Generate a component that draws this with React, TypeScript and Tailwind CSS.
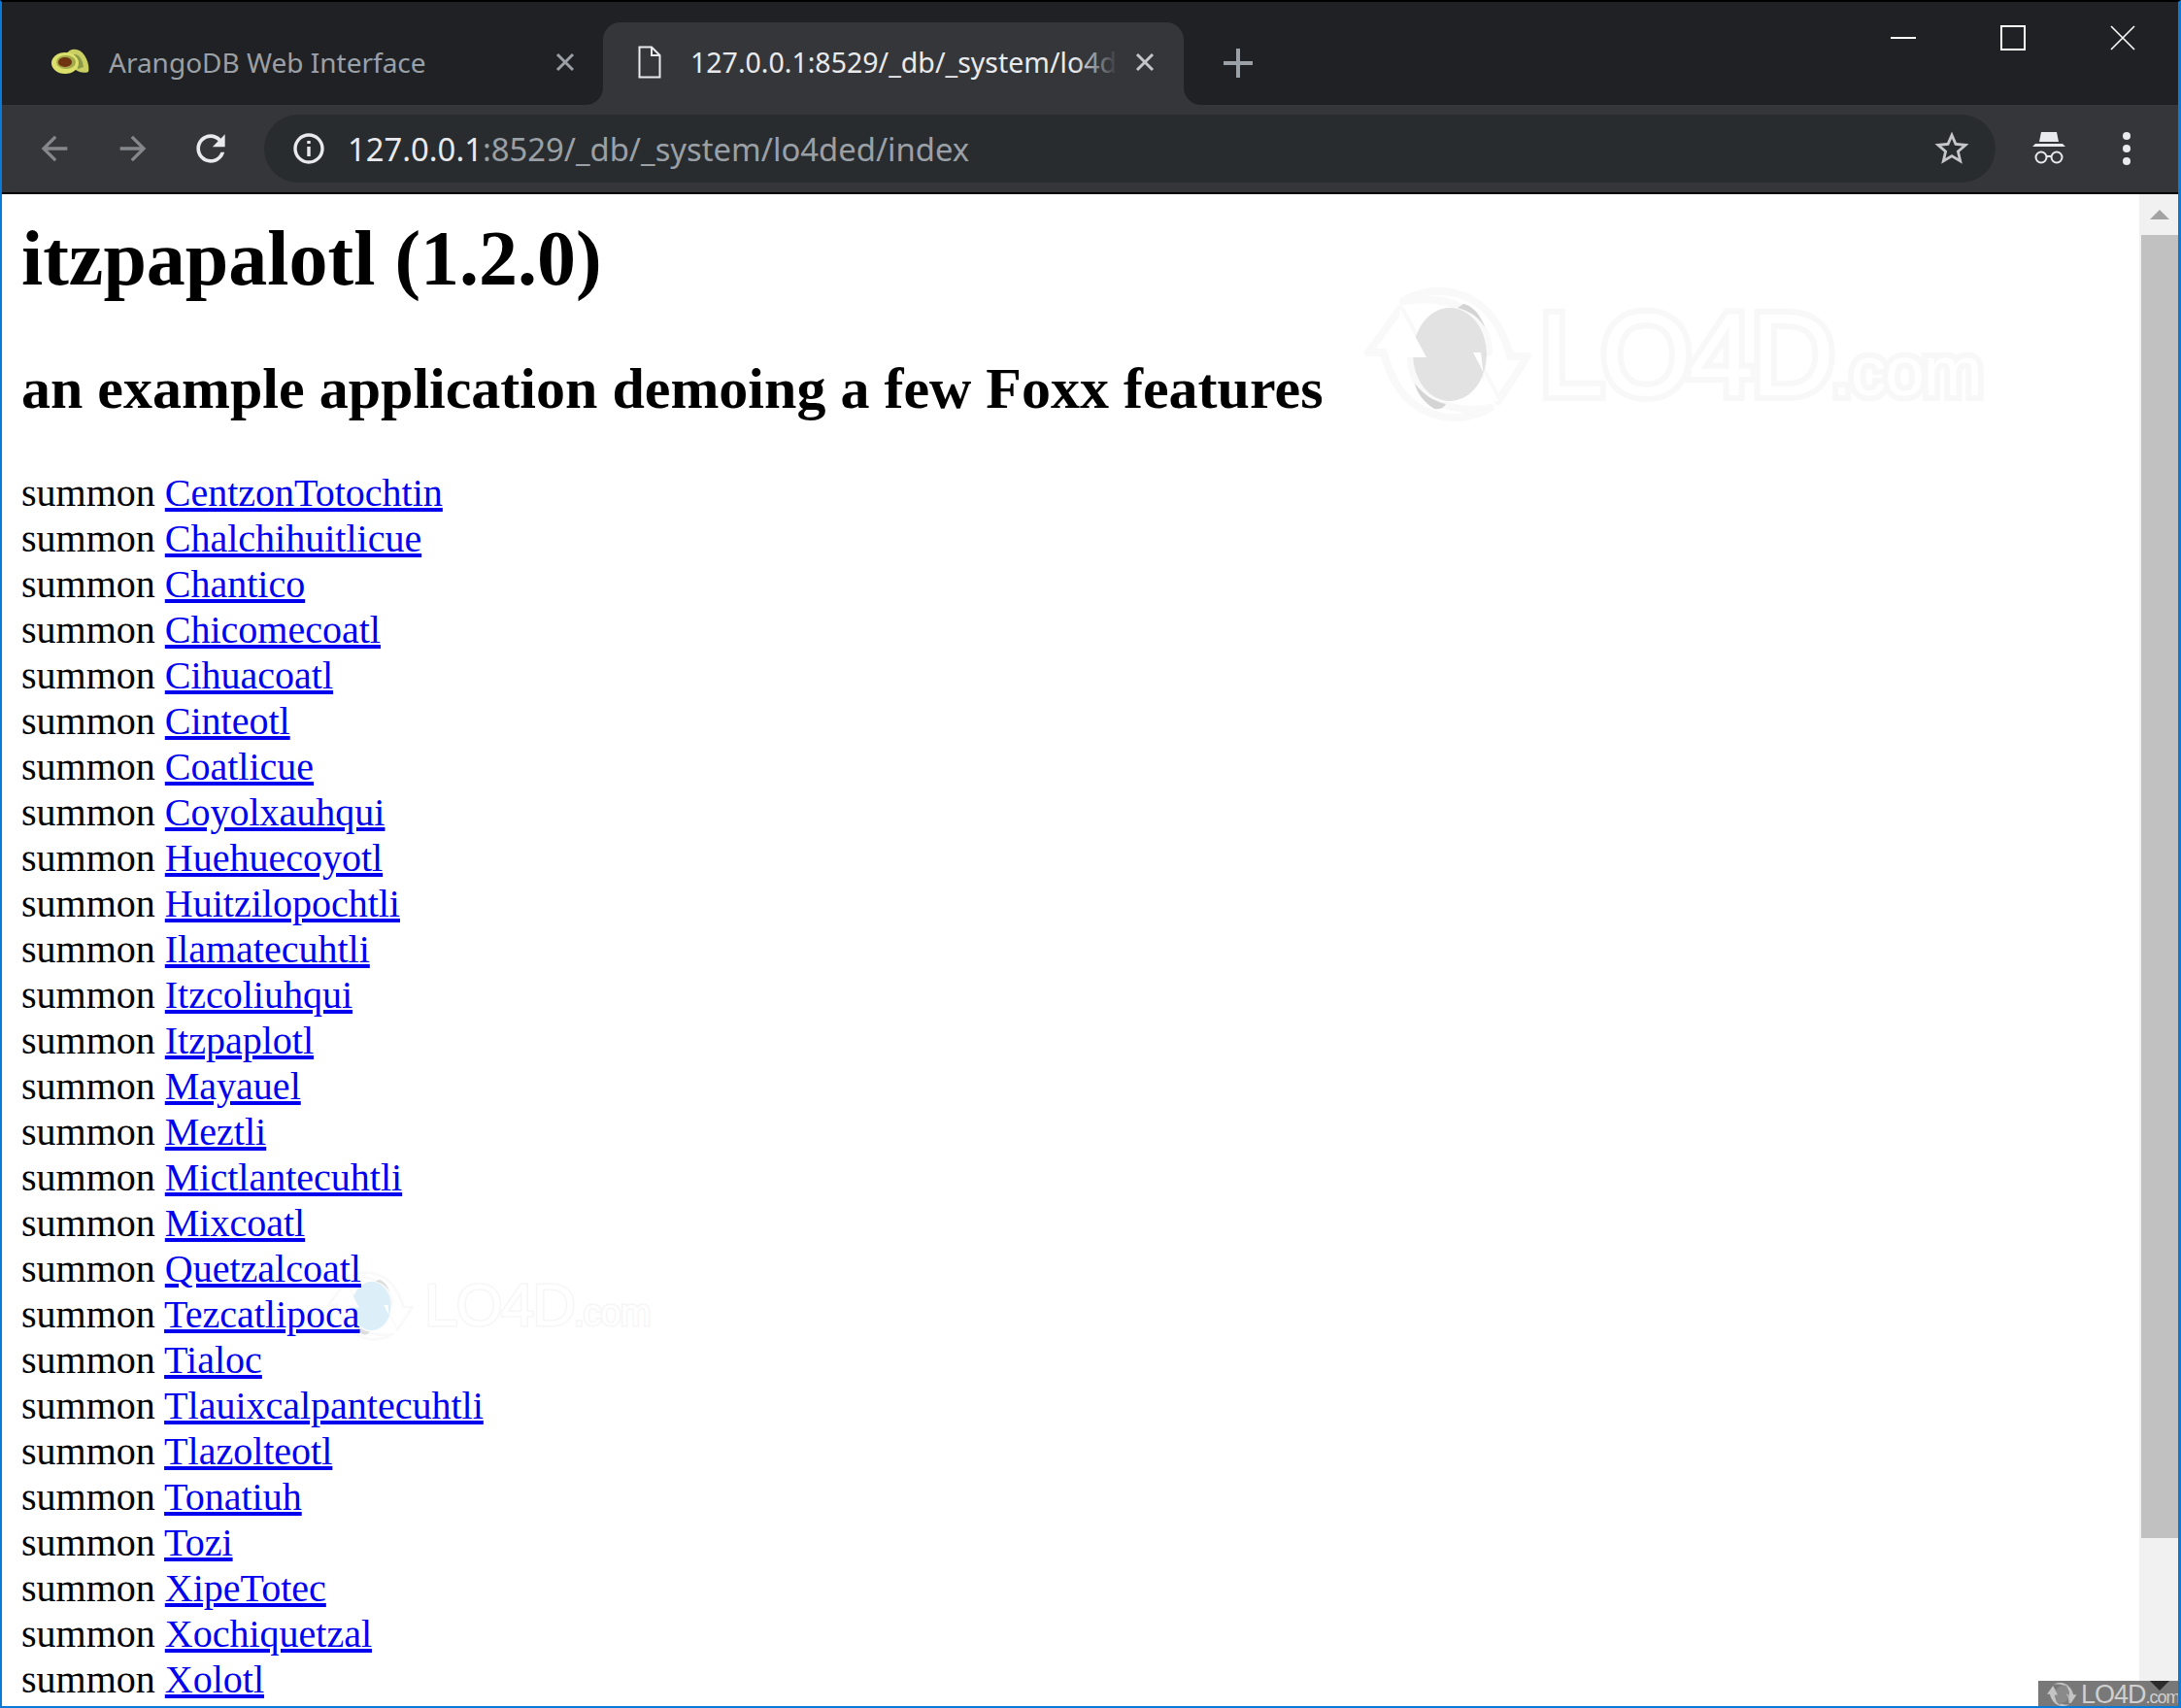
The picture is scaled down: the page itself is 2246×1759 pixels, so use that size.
import React from 'react';

const gods = [
  'CentzonTotochtin', 'Chalchihuitlicue', 'Chantico', 'Chicomecoatl', 'Cihuacoatl', 'Cinteotl', 'Coatlicue',
  'Coyolxauhqui', 'Huehuecoyotl', 'Huitzilopochtli', 'Ilamatecuhtli', 'Itzcoliuhqui', 'Itzpaplotl', 'Mayauel',
  'Meztli', 'Mictlantecuhtli', 'Mixcoatl', 'Quetzalcoatl', 'Tezcatlipoca', 'Tialoc', 'Tlauixcalpantecuhtli',
  'Tlazolteotl', 'Tonatiuh', 'Tozi', 'XipeTotec', 'Xochiquetzal', 'Xolotl',
];

const UI_FONT = 'font-["Noto_Sans",sans-serif]';

const UP_ARROW = 'M47 23L74 73L58 73C58 90 66 115 100 124C115 128 128 127 140 125C105 145 60 135 40 95C32 78 30 70 30 68L14 68Z';
const DOWN_ARROW = 'M148 118L122 68L138 68C138 50 128 25 95 16C78 12 62 13 50 15C85 -5 130 5 150 45C158 62 160 70 160 72L178 72Z';

// LO4D logo: round blob with an up and a down arrow
const LogoMark = ({ blob, arrow, halo, crescent, className }: { blob: string; arrow: string; halo: number; crescent: string; className: string }) => (
  <svg viewBox="0 0 190 140" className={className}>
    <g stroke="#f9f9f9" strokeWidth={halo} strokeLinejoin="round">
      <path d={UP_ARROW} fill={arrow} />
      <path d={DOWN_ARROW} fill={arrow} />
    </g>
    <path d="M112 18C122 20 130 30 134 42C128 32 120 26 106 22Z" fill={crescent} />
    <path d="M62 100C64 110 72 120 82 126C90 127 92 124 94 121C80 118 70 110 62 100Z" fill={crescent} />
    <ellipse cx="98" cy="70" rx="38" ry="48" fill={blob} />
    <path d="M47 23L74 73L50 73L45 40Z" fill={arrow} />
    <path d="M122 68L148 118L136 118L130 68Z" fill={arrow} />
  </svg>
);

const Arrow = ({ flip }: { flip?: boolean }) => (
  <svg viewBox="0 0 24 24" className={`w-[40px] h-[40px] text-[#84878b] ${flip ? '-scale-x-100' : ''}`} fill="currentColor">
    <path d="M20 11H7.83l5.59-5.59L12 4l-8 8 8 8 1.41-1.41L7.83 13H20v-2z" />
  </svg>
);

const Favicon = () => (
  <svg viewBox="0 0 40 28" className="w-[40px] h-[28px] shrink-0">
    <path d="M16 6C20 -1 30 -1 35 7C39 13 40 20 39 24C34 26 29 24 26 22Z" fill="#c9cf62" />
    <path d="M24 6C29 5 33 11 34 19L28 21Z" fill="#8c9a48" />
    <ellipse cx="15" cy="15" rx="14" ry="11" fill="#dbe06b" />
    <ellipse cx="16" cy="14" rx="10" ry="7" fill="#a3a94b" />
    <ellipse cx="15" cy="14" rx="7" ry="5" fill="#6f3410" />
  </svg>
);

const TabClose = ({ color }: { color: string }) => (
  <svg viewBox="0 0 20 20" className={`w-[20px] h-[20px] shrink-0 ${color}`} stroke="currentColor" strokeWidth="3" fill="none">
    <path d="M2 2L18 18M18 2L2 18" />
  </svg>
);

export default function App() {
  return (
    <div className="relative flex flex-col w-[2246px] h-[1759px] overflow-hidden bg-white border-l-2 border-r-[3px] border-b-2 border-[#0a7ad8] border-t-2 border-t-black">
      {/* タブバー */}
      <div className={`flex items-end h-[106px] shrink-0 bg-[#202124] ${UI_FONT}`}>
        <div className="flex items-center w-[619px] h-[85px] pl-[50px] pr-[29px] pb-[4px]">
          <Favicon />
          <span className="ml-[20px] text-[28px] leading-[40px] text-[#9aa0a6]">ArangoDB Web Interface</span>
          <div className="ml-auto"><TabClose color="text-[#9aa0a6]" /></div>
        </div>
        <div className="relative flex items-center w-[598px] h-[85px] pl-[36px] pr-[30px] pb-[4px] bg-[#35363a] rounded-t-[18px]">
          <div className="absolute left-[-18px] bottom-0 w-[18px] h-[18px] bg-[#35363a]">
            <div className="w-full h-full bg-[#202124] rounded-br-[18px]" />
          </div>
          <div className="absolute right-[-18px] bottom-0 w-[18px] h-[18px] bg-[#35363a]">
            <div className="w-full h-full bg-[#202124] rounded-bl-[18px]" />
          </div>
          <svg viewBox="0 0 24 34" className="w-[24px] h-[34px] shrink-0 text-[#e8eaed]" fill="none" stroke="currentColor" strokeWidth="2">
            <path d="M1.5 1.5H14L22.5 10V32.5H1.5ZM14 1.5V10H22.5" />
          </svg>
          <div className="relative ml-[30px] w-[440px] overflow-hidden whitespace-nowrap text-[28.5px] leading-[44px] text-[#e8eaed]">
            127.0.0.1:8529/_db/_system/lo4ded/index
            <div className="absolute right-0 top-0 bottom-0 w-[44px] bg-linear-to-r from-transparent to-[#35363a]" />
          </div>
          <div className="ml-auto"><TabClose color="text-[#c4c6c9]" /></div>
        </div>
        <svg viewBox="0 0 30 30" className="w-[30px] h-[30px] ml-[41px] mb-[28px] text-[#9aa0a6]" fill="currentColor">
          <path d="M13 0H17V13H30V17H17V30H13V17H0V13H13Z" />
        </svg>
        {/* ウィンドウ操作 */}
        <div className="flex ml-auto self-start h-[74px] text-white">
          <div className="flex items-center justify-center w-[113px]">
            <svg viewBox="0 0 26 2" className="w-[26px] h-[2px]" fill="currentColor"><rect width="26" height="2" /></svg>
          </div>
          <div className="flex items-center justify-center w-[113px]">
            <svg viewBox="0 0 26 26" className="w-[26px] h-[26px]" fill="none" stroke="currentColor" strokeWidth="2"><rect x="1" y="1" width="24" height="24" /></svg>
          </div>
          <div className="flex items-center justify-center w-[114px]">
            <svg viewBox="0 0 26 26" className="w-[26px] h-[26px]" fill="none" stroke="currentColor" strokeWidth="1.6"><path d="M1 1L25 25M25 1L1 25" /></svg>
          </div>
        </div>
      </div>

      {/* ツールバー */}
      <div className="flex items-center h-[92px] shrink-0 pl-[14px] bg-[#35363a] border-b-2 border-black">
        <div className="flex items-center justify-center w-[80px]"><Arrow /></div>
        <div className="flex items-center justify-center w-[81px]"><Arrow flip /></div>
        <div className="flex items-center justify-center w-[80px]">
          <svg viewBox="0 0 24 24" className="w-[44px] h-[44px] text-[#e8eaed]" fill="currentColor">
            <path d="M17.65 6.35C16.2 4.9 14.21 4 12 4c-4.42 0-7.99 3.58-7.99 8s3.57 8 7.99 8c3.73 0 6.84-2.55 7.73-6h-2.08c-.82 2.33-3.04 4-5.65 4-3.31 0-6-2.69-6-6s2.69-6 6-6c1.66 0 3.14.69 4.22 1.78L13 11h7V4l-2.35 2.35z" />
          </svg>
        </div>
        <div className={`flex items-center w-[1783px] h-[70px] ml-[15px] pl-[30px] pr-[24px] rounded-full bg-[#292c2f] ${UI_FONT}`}>
          <svg viewBox="0 0 32 32" className="w-[32px] h-[32px] shrink-0 text-[#e8eaed]" fill="none" stroke="currentColor" strokeWidth="3.4">
            <circle cx="16" cy="16" r="14" />
            <path d="M16 14V24M16 8V11" />
          </svg>
          <span className="ml-[24px] pt-[2px] text-[32.8px] leading-[44px] text-[#9aa0a6]"><span className="text-[#e8eaed]">127.0.0.1</span>:8529/_db/_system/lo4ded/index</span>
          <svg viewBox="0 0 24 24" className="w-[42px] h-[42px] ml-auto text-[#c4c6c9]" fill="currentColor">
            <path d="M22 9.24l-7.19-.62L12 2 9.19 8.63 2 9.24l5.46 4.73L5.82 21 12 17.27 18.18 21l-1.63-7.03L22 9.24zM12 15.4l-3.76 2.27 1-4.28-3.32-2.88 4.38-.38L12 6.1l1.71 4.04 4.38.38-3.32 2.88 1 4.28L12 15.4z" />
          </svg>
        </div>
        <svg viewBox="0 0 34 34" className="w-[34px] h-[34px] ml-[38px] text-[#e8eaed]" fill="none">
          <path d="M9 0L25 0L27 10H7ZM0 15H34L31 12H3Z" fill="currentColor" />
          <circle cx="9" cy="26" r="5.5" stroke="currentColor" strokeWidth="2" />
          <circle cx="25" cy="26" r="5.5" stroke="currentColor" strokeWidth="2" />
          <path d="M14 25H20" stroke="currentColor" strokeWidth="2" />
        </svg>
        <svg viewBox="0 0 8 34" className="w-[8px] h-[34px] ml-[59px] text-[#e8eaed]" fill="currentColor">
          <ellipse cx="4" cy="4" rx="4" ry="4" />
          <ellipse cx="4" cy="17" rx="4" ry="4" />
          <ellipse cx="4" cy="30" rx="4" ry="4" />
        </svg>
      </div>

      {/* ページ本体 */}
      <div className="relative flex flex-1 min-h-0">
        <div className="relative flex-1 overflow-hidden pl-[20px] font-['Liberation_Serif',serif] text-black">
          {/* 透かし */}
          <div className="absolute left-[1393px] top-[95px] flex items-start">
            <LogoMark blob="#e2e2e2" arrow="#ffffff" halo={8} crescent="#d4d4d4" className="w-[190px] h-[140px]" />
            <span className="mt-[10px] font-['Liberation_Sans',sans-serif] text-[120px] leading-none tracking-[-3px] text-white [-webkit-text-stroke:12px_#f8f8f8] [paint-order:stroke]">
              LO4D<span className="text-[73px] tracking-[-1px]">.com</span>
            </span>
          </div>
          <div className="absolute left-[329px] top-[1108px] flex items-start">
            <LogoMark blob="#dceef8" arrow="#ffffff" halo={5} crescent="#dddddd" className="w-[100px] h-[74px]" />
            <span className="ml-[6px] mt-[5px] font-['Liberation_Sans',sans-serif] text-[62px] leading-none tracking-[-2px] text-white [-webkit-text-stroke:3px_#f6f6f6] [paint-order:stroke]">
              LO4D<span className="text-[38px] tracking-[-1px]">.com</span>
            </span>
          </div>

          <div className="relative">
            <h1 className="text-[80px] leading-[94px] font-bold pt-[19px]">itzpapalotl (1.2.0)</h1>
            <h2 className="text-[60px] leading-[70px] font-bold mt-[52px]">an example application demoing a few Foxx features</h2>
            <div className="mt-[49px] text-[40px] leading-[47px]">
              {gods.map((name) => (
                <div key={name} className="whitespace-nowrap">
                  summon <a href="#" className="text-[#0000ee] underline decoration-[4px]">{name}</a>
                </div>
              ))}
            </div>
          </div>
        </div>

        {/* スクロールバー */}
        <div className="flex flex-col shrink-0 w-[40px] pl-[2px] bg-[#f1f1f1]">
          <div className="flex items-center justify-center h-[42px] shrink-0">
            <div className="w-0 h-0 border-l-[10px] border-r-[10px] border-b-[10px] border-l-transparent border-r-transparent border-b-[#a3a3a3]" />
          </div>
          <div className="h-[1342px] bg-[#c1c1c1]" />
        </div>

        {/* 右下のバッジ */}
        <div className="absolute right-[-3px] bottom-[-2px] flex items-center w-[147px] h-[28px] pl-[6px] bg-[#787878]">
          <LogoMark blob="#8a8a8a" arrow="#c4c4c4" halo={0} crescent="#8a8a8a" className="w-[36px] h-[26px] shrink-0" />
          <span className="ml-[2px] font-['Liberation_Sans',sans-serif] text-[27px] leading-none tracking-[-1px] text-[#cfcfcf]">
            LO4D<span className="text-[18px]">.com</span>
          </span>
          <div className="absolute left-[115px] top-0 w-0 h-0 border-l-[10px] border-r-[10px] border-t-[10px] border-l-transparent border-r-transparent border-t-[#2b2b2b]" />
        </div>
      </div>
    </div>
  );
}
